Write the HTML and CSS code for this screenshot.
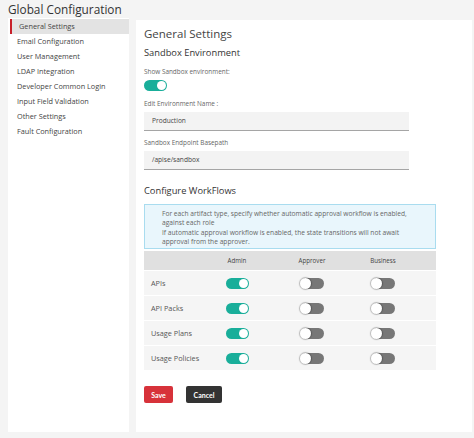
FILE: index.html
```html
<!DOCTYPE html>
<html>
<head>
<meta charset="utf-8">
<link rel="stylesheet" href="styles.css">
</head>
<body>
<div class="page">
  <div class="title">Global Configuration</div>
  <div class="layout">
    <nav class="sidebar">
      <div class="nav-item active">General Settings</div>
      <div class="nav-item">Email Configuration</div>
      <div class="nav-item">User Management</div>
      <div class="nav-item">LDAP Integration</div>
      <div class="nav-item">Developer Common Login</div>
      <div class="nav-item">Input Field Validation</div>
      <div class="nav-item">Other Settings</div>
      <div class="nav-item">Fault Configuration</div>
    </nav>
    <main class="panel">
      <h1 class="h1">General Settings</h1>
      <h2 class="h2">Sandbox Environment</h2>
      <div class="label l-show">Show Sandbox environment:</div>
      <div class="toggle-row"><span class="toggle on"></span></div>
      <div class="label l-edit">Edit Environment Name :</div>
      <div class="input">Production</div>
      <div class="label l-base">Sandbox Endpoint Basepath</div>
      <div class="input">/apise/sandbox</div>
      <h2 class="h2 h2-wf">Configure WorkFlows</h2>
      <div class="info">
        <p>For each artifact type, specify whether automatic approval workflow is enabled,<br>against each role</p>
        <p>If automatic approval workflow is enabled, the state transitions will not await<br>approval from the approver.</p>
      </div>
      <div class="table">
        <div class="thead">
          <div></div><div>Admin</div><div>Approver</div><div>Business</div><div></div>
        </div>
        <div class="trow">
          <div class="rlabel">APIs</div>
          <div class="cell"><span class="toggle on"></span></div>
          <div class="cell"><span class="toggle"></span></div>
          <div class="cell"><span class="toggle"></span></div>
          <div></div>
        </div>
        <div class="trow">
          <div class="rlabel">API Packs</div>
          <div class="cell"><span class="toggle on"></span></div>
          <div class="cell"><span class="toggle"></span></div>
          <div class="cell"><span class="toggle"></span></div>
          <div></div>
        </div>
        <div class="trow">
          <div class="rlabel">Usage Plans</div>
          <div class="cell"><span class="toggle on"></span></div>
          <div class="cell"><span class="toggle"></span></div>
          <div class="cell"><span class="toggle"></span></div>
          <div></div>
        </div>
        <div class="trow">
          <div class="rlabel">Usage Policies</div>
          <div class="cell"><span class="toggle on"></span></div>
          <div class="cell"><span class="toggle"></span></div>
          <div class="cell"><span class="toggle"></span></div>
          <div></div>
        </div>
      </div>
      <div class="buttons">
        <button class="btn save">Save</button>
        <button class="btn cancel">Cancel</button>
      </div>
    </main>
  </div>
</div>
</body>
</html>
```

FILE: styles.css
```css
* { box-sizing: border-box; }
html, body { margin: 0; padding: 0; }
body {
  background: #f4f4f4;
  font-family: "Open Sans", "DejaVu Sans", sans-serif;
  color: #444;
  width: 474px;
  height: 438px;
  overflow: hidden;
}
.title {
  padding-left: 8px;
  font-size: 11.8px;
  line-height: 18px;
  height: 18px;
  color: #333;
}
.layout {
  display: flex;
  gap: 7px;
  padding: 0 2px 0 8px;
}
.sidebar {
  width: 121px;
  height: 414px;
  background: #fff;
  padding-top: 1px;
  padding-left: 2px;
}
.nav-item {
  height: 15px;
  line-height: 15px;
  font-size: 7.3px;
  padding-left: 7px;
  color: #444;
  white-space: nowrap;
}
.nav-item.active {
  background: #e3e3e3;
  border-left: 2px solid #c8202a;
  padding-left: 7px;
}
.panel {
  flex: 1;
  height: 412px;
  margin-top: 2px;
  background: #fff;
  padding-left: 8px;
  display: flex;
  flex-direction: column;
}
.h1 {
  margin: 7px 0 0;
  font-size: 11.5px;
  line-height: 14px;
  font-weight: 400;
  color: #444;
}
.h2 {
  margin: 6px 0 0;
  font-size: 9.3px;
  line-height: 12px;
  font-weight: 500;
  color: #333;
}
.label {
  font-size: 6.4px;
  line-height: 10px;
  color: #666;
}
.l-show { margin-top: 8px; }
.l-edit { margin-top: 8px; }
.l-base { margin-top: 7px; }
.toggle-row { margin-top: 3px; height: 11px; display: flex; }
.input {
  margin-top: 3px;
  width: 265px;
  height: 19px;
  background: #f3f3f3;
  border-bottom: 1px solid #a5a5a5;
  font-size: 6.6px;
  line-height: 18px;
  padding-left: 8px;
  color: #444;
}
.h2-wf { margin-top: 15px; }
.info {
  margin-top: 7px;
  width: 292px;
  height: 45px;
  background: #e9f6fc;
  border: 1px solid #a9dcef;
  padding: 4px 0 0 17px;
  font-size: 6.65px;
  line-height: 9px;
  color: #666;
  white-space: nowrap;
}
.info p { margin: 0; }
.info p + p { margin-top: 1px; }
.table {
  margin-top: 2px;
  width: 292px;
  background: #f5f5f5;
}
.thead, .trow {
  display: grid;
  grid-template-columns: 60px 66px 84px 58px 1fr;
  align-items: center;
}
.thead {
  height: 19px;
  background: #e0e0e0;
  font-size: 6.2px;
  font-weight: 500;
  color: #444;
  text-align: center;
}
.trow {
  height: 25px;
  border-top: 1px solid #fff;
}
.trow:first-of-type { border-top: none; }
.rlabel {
  padding-left: 7px;
  font-size: 7.3px;
  color: #555;
}
.cell { display: flex; justify-content: center; }
.toggle {
  position: relative;
  display: inline-block;
  width: 23px;
  height: 11px;
  border-radius: 6px;
  background: #777;
}
.toggle::after {
  content: "";
  position: absolute;
  top: 0;
  left: -1px;
  width: 11px;
  height: 11px;
  border-radius: 50%;
  background: #fff;
  box-shadow: 0 0 1px 1px rgba(0,0,0,0.25);
}
.toggle.on { background: #19ae9a; }
.toggle.on::after {
  left: auto;
  right: 1px;
  top: 1px;
  width: 9px;
  height: 9px;
  box-shadow: none;
}
.buttons {
  margin-top: 16px;
  display: flex;
  gap: 13px;
}
.btn {
  height: 17px;
  border: none;
  border-radius: 2px;
  font-family: "Lato", sans-serif;
  font-weight: 700;
  font-size: 7px;
  color: #fff;
  padding: 0;
  cursor: pointer;
}
.save { width: 29px; background: #d7323a; }
.cancel { width: 36px; background: #333; }
```
